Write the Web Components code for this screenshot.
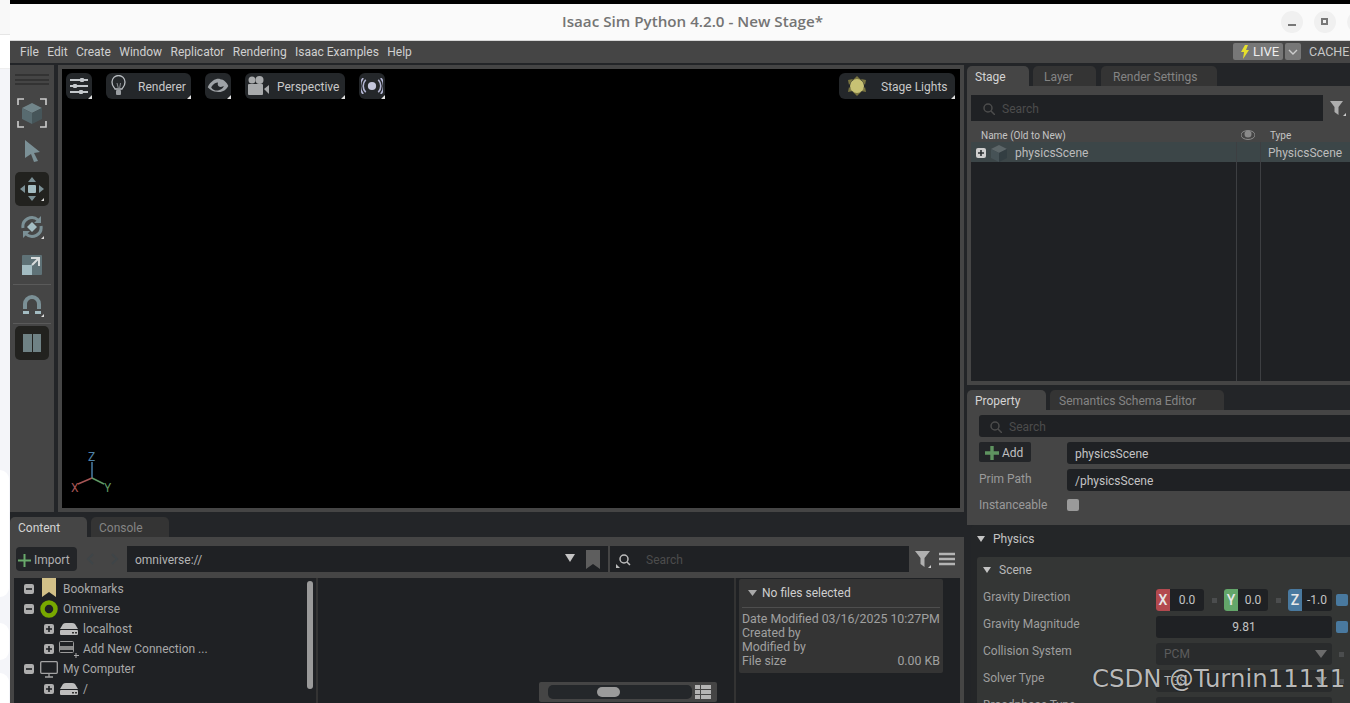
<!DOCTYPE html>
<html>
<head>
<meta charset="utf-8">
<title>Isaac Sim</title>
<style>
html,body{margin:0;height:703px;overflow:hidden;background:#232528;}
body{display:flex;font-family:Roboto,"Liberation Sans",sans-serif;font-size:12px;color:#b4b4b4;position:relative;}
</style>
</head>
<body>
<desk-strip></desk-strip>
<app-window></app-window>
<water-mark>CSDN @Turnin11111</water-mark>

<script>
// small helper, every element just stamps its own html into an open shadow root
class Base extends HTMLElement{
    constructor(){
        super();
        this.attachShadow({mode:"open"});
        this.shadowRoot.innerHTML = this.render();
    }
    attr(name, fallback){
        return this.hasAttribute(name) ? this.getAttribute(name) : fallback;
    }
}

class DeskStrip extends Base{
    render(){ return `
    <style>
    :host{display:flex;flex-direction:column;flex:none;width:10px;height:703px;background:#f4f5f9;overflow:hidden;}
    .a{height:34px;background:#f8f8f8;border-bottom:1px solid #e6e6e6;flex:none;}
    .b{height:33px;background:#fff;border-bottom:1px solid #eee;flex:none;}
    .c{height:401px;flex:none;}
    .d{height:127px;width:9px;background:#fff;border-radius:0 12px 12px 0;flex:none;}
    .e{margin-top:26px;height:37px;width:9px;background:#fff;border-radius:0 18px 18px 0;flex:none;}
    .f{margin-top:13px;height:40px;width:9px;background:#fff;border-radius:0 18px 18px 0;flex:none;}
    </style>
    <div class="a"></div><div class="b"></div><div class="c"></div><div class="d"></div><div class="e"></div><div class="f"></div>`; }
}

class TitleBar extends Base{
    render(){ return `
    <style>
    :host{display:flex;flex:none;height:36px;background:#fafafa;border-bottom:1px solid #d6d6d6;align-items:center;position:relative;}
    .t{flex:none;width:1365px;text-align:center;font:600 15.2px "Open Sans",sans-serif;color:#747474;padding-bottom:2px;}
    .btns{position:absolute;left:1271px;top:7px;display:flex;gap:11px;}
    .b{width:22px;height:22px;border-radius:50%;background:#f0f0f0;display:flex;align-items:center;justify-content:center;}
    </style>
    <div class="t">Isaac Sim Python 4.2.0 - New Stage*</div>
    <div class="btns">
      <div class="b"><svg width="10" height="10"><rect x="1" y="7" width="8" height="2" fill="#777"/></svg></div>
      <div class="b"><svg width="10" height="10"><path fill="#777" fill-rule="evenodd" d="M1 1h7v7H1zM3 3v3h3V3z"/></svg></div>
      <div class="b"></div>
    </div>`; }
}

class MenuBar extends Base{
    render(){ return `
    <style>
    :host{display:flex;flex:none;height:22px;background:#454545;align-items:center;padding:0 0 1px 10px;box-sizing:border-box;color:#d0d0d0;font-size:12px;white-space:nowrap;}
    span{margin-right:8.4px;}
    .live{position:absolute;left:1223px;top:43px;width:50px;height:17px;background:#777;border-radius:2px;color:#eee;display:flex;align-items:center;padding-left:8px;box-sizing:border-box;gap:4px;font-size:13px;}
    .drop{position:absolute;left:1275px;top:43px;width:16px;height:17px;background:#777;border-radius:2px;display:flex;align-items:center;justify-content:center;}
    .cache{position:absolute;left:1299px;top:44px;color:#c8c8c8;font-size:12.5px;}
    </style>
    <span>File</span><span>Edit</span><span>Create</span><span>Window</span><span>Replicator</span><span>Rendering</span><span>Isaac Examples</span><span>Help</span>
    <div class="live"><svg width="8" height="14" viewBox="0 0 8 14"><path fill="#e6e02c" d="M4 0h3L5 5h3L2 14l1-7H0z"/></svg>LIVE</div>
    <div class="drop"><svg width="10" height="6"><path d="M1 1l4 4 4-4" fill="none" stroke="#ccc" stroke-width="1.400"/></svg></div>
    <div class="cache">CACHE</div>`; }
}

const toolColor = "#7b9096";

class SideTools extends Base{
    render(){ return `
    <style>
    :host{display:flex;flex-direction:column;flex:none;width:44px;height:447px;background:#454545;align-items:center;box-sizing:border-box;padding-top:9px;}
    .grip{width:34px;flex:none;border-top:2px solid #333;border-bottom:2px solid #333;position:relative;height:7px;}
    .grip:after{content:"";position:absolute;left:0;right:0;top:2.5px;height:2px;background:#333;}
    .tool{width:34px;height:34px;flex:none;display:flex;align-items:center;justify-content:center;margin-top:4px;border-radius:5px;position:relative;}
    .on{background:#22221f;}
    .tri:after{content:"";position:absolute;right:5px;bottom:5px;border-left:3px solid transparent;border-bottom:3px solid #ddd;}
    .sep{width:38px;height:1px;background:#5a5a5a;flex:none;}
    </style>
    <div class="grip"></div>
    <div class="tool" style="margin-top:11px"><svg width="30" height="30" viewBox="0 0 30 30">
      <path d="M1 7V1h6M23 1h6v6M1 23v6h6M23 29h6v-6" fill="none" stroke="#ccc" stroke-width="1.600"/>
      <path d="M15 5l10 5-10 5-10-5z" fill="#71858a"/><path d="M5 10l10 5v11L5 21z" fill="#586b70"/><path d="M25 10l-10 5v11l10-5z" fill="#465559"/>
    </svg></div>
    <div class="tool"><svg width="18" height="24" viewBox="0 0 18 24"><path fill="${toolColor}" d="M2 1l15 12-6 1 4 8-4 1-3-8-6 4z"/></svg></div>
    <div class="tool on tri"><svg width="24" height="24" viewBox="0 0 24 24"><g fill="${toolColor}"><rect x="8" y="8" width="8" height="8" rx="1" fill="#a3bcc2"/><path d="M12 0l4 5H8zM12 24l-4-5h8zM0 12l5-4v8zM24 12l-5 4V8z"/></g></svg></div>
    <div class="tool tri"><svg width="24" height="24" viewBox="0 0 24 24"><path d="M12 7l5 5-5 5-5-5z" fill="#a3bcc2"/><path d="M3 13a9 9 0 0 1 15-8M21 11a9 9 0 0 1-15 8" fill="none" stroke="${toolColor}" stroke-width="3"/><path d="M21 1v7h-7zM3 23v-7h7z" fill="${toolColor}"/></svg></div>
    <div class="tool"><svg width="20" height="20" viewBox="0 0 20 20"><rect width="20" height="20" rx="1" fill="#5f7277"/><rect y="10" width="10" height="10" fill="#a3bcc2"/><path d="M9 3h8v8M16 4l-6 6" fill="none" stroke="#d8dcdc" stroke-width="2"/></svg></div>
    <div class="sep" style="margin-top:2px"></div>
    <div class="tool tri" style="margin-top:3px"><svg width="20" height="20" viewBox="0 0 20 20"><path d="M3 14V9a7 7 0 0 1 14 0v5" fill="none" stroke="${toolColor}" stroke-width="4"/><rect x="1" y="16" width="6" height="3" fill="#a3bcc2"/><rect x="13" y="16" width="6" height="3" fill="#a3bcc2"/></svg></div>
    <div class="sep" style="margin-top:1px"></div>
    <div class="tool on" style="margin-top:2px"><svg width="20" height="20" viewBox="0 0 20 20"><rect x="1" y="1" width="9" height="18" fill="#6f8285"/><rect x="11" y="1" width="8" height="18" fill="#6f8285"/></svg></div>`; }
}

// button floating on the black viewport, label optional
class VpButton extends Base{
    render(){
        const label = this.attr("label","");
        return `
    <style>
    :host{display:flex;flex:none;height:26px;width:26px;justify-content:center;background:#24272a;border-radius:6px;align-items:center;position:relative;box-sizing:border-box;color:#c8c8c8;font-size:12px;white-space:nowrap;}
    :host([label]){justify-content:flex-start;padding-left:var(--pad,4px);}
    .c{position:absolute;right:0;bottom:0;border-left:4px solid transparent;border-bottom:4px solid #e0e0e0;}
    .l{margin-left:var(--gap,8px);padding-top:2px;}
    </style>
    <slot></slot>${label ? `<span class="l">${label}</span>` : ""}<i class="c"></i>`;
    }
}

class ViewPort extends Base{
    render(){ return `
    <style>
    :host{display:block;flex:1;height:447px;background:#454545;box-sizing:border-box;padding:4px;}
    .black{height:439px;background:#000;position:relative;box-sizing:border-box;padding:4px 5px 0 4px;display:flex;gap:14px;}
    .sp{flex:1;}
    .axis{position:absolute;left:6px;bottom:12px;}
    </style>
    <div class="black">
      <vp-button><svg width="18" height="18" viewBox="0 0 18 18"><g stroke="#c4c8cc" stroke-width="2"><path d="M0 3h18M0 9h18M0 15h18"/></g><g fill="#c4c8cc"><rect x="10" y="1" width="4" height="4" rx="1"/><rect x="3" y="7" width="4" height="4" rx="1"/><rect x="9" y="13" width="4" height="4" rx="1"/></g></svg></vp-button>
      <vp-button label="Renderer" style="width:85px;--pad:4px;--gap:9px"><svg width="19" height="22" viewBox="0 0 19 22"><path d="M5 14c-1-2-3-3-3-7a6.500 6.500 0 0 1 13 0c0 4-2 5-3 7z" fill="none" stroke="#b8bcc0" stroke-width="1.300"/><path d="M7 8l1.500 6M10.500 8L9.500 14" stroke="#8a8e92" fill="none"/><rect x="6" y="15" width="5" height="5" rx="1" fill="#9a9ea2"/></svg></vp-button>
      <vp-button><svg width="22" height="16" viewBox="0 0 18 14"><path d="M0 8C3 2 8 0 11 1c3 0 6 3 7 6-2 4-6 6-10 5-3 0-6-2-8-4z" fill="#9ea2a6"/><path d="M3 8c2-3 4-4 6-4-1 3 1 5 5 3 0 2-4 4-6 4-2 0-4-1-5-3z" fill="#24272a"/></svg></vp-button>
      <vp-button label="Perspective" style="width:100px;--pad:2px;--gap:7px"><svg width="23" height="20" viewBox="0 0 23 20"><g fill="#a8aaac"><circle cx="5" cy="4" r="3.500"/><circle cx="12.500" cy="4" r="4"/><rect x="1" y="8" width="15" height="11" rx="1"/><path d="M17 13l5-4v9z"/></g></svg></vp-button>
      <vp-button><svg width="22" height="16" viewBox="0 0 18 14"><circle cx="9" cy="7" r="3.600" fill="#c4c6dc"/><path d="M3.500 1.500a8 8 0 0 0 0 11M14.500 1.500a8 8 0 0 1 0 11M1.300 0a11 11 0 0 0 0 14M16.700 0a11 11 0 0 1 0 14" fill="none" stroke="#b4b6d4" stroke-width="1.400"/></svg></vp-button>
      <div class="sp"></div>
      <vp-button label="Stage Lights" style="width:116px;--pad:9px;--gap:15px"><svg width="18" height="20" viewBox="0 0 18 20"><g fill="#7a7540"><path d="M5 4l4-4 4 4zM5 16l4 4 4-4zM13 3l5 1-1 5zM1 11L0 16l5-1zM17 11l1 5-5-1zM1 9L0 4l5-1z"/></g><circle cx="9" cy="10" r="7" fill="#c8c274"/></svg></vp-button>
      <svg class="axis" width="44" height="46" viewBox="0 0 44 46">
        <path d="M24 28V12" stroke="#4a7ea6" stroke-width="1.500"/><path d="M24 28l-14 6" stroke="#a85656" stroke-width="1.500"/><path d="M24 28l12 6" stroke="#5f9a64" stroke-width="1.500"/>
        <text x="20" y="11" font-size="12" font-family="Roboto" fill="#4f82a8">Z</text>
        <text x="3" y="42" font-size="12" font-family="Roboto" fill="#a85656">X</text>
        <text x="36" y="42" font-size="12" font-family="Roboto" fill="#5f9a64">Y</text>
      </svg>
    </div>`; }
}

class PanelTab extends Base{
    render(){ return `
    <style>
    :host{display:flex;flex:none;height:20px;align-items:center;background:#343434;color:#848484;border-radius:5px 5px 0 0;box-sizing:border-box;padding:2px 8px 0;font-size:12px;margin-right:4px;white-space:nowrap;}
    :host([on]){background:#454545;color:#d4d4d4;}
    </style><slot></slot>`; }
}

class TreeRow extends Base{
    render(){
        const d = +this.attr("depth","0");
        const open = this.hasAttribute("open");
        return `
    <style>
    :host{display:flex;flex:none;height:20px;align-items:center;color:#a8a8a8;font-size:12px;white-space:nowrap;box-sizing:border-box;padding-left:${10+d*20}px;position:relative;}
    .ic{width:28px;height:20px;margin-left:1px;display:flex;align-items:center;justify-content:center;flex:none;}
    </style>
    <svg width="10" height="10" viewBox="0 0 10 10" style="flex:none"><rect width="10" height="10" rx="2" fill="#aeaeae"/><path d="${open ? "M2 5h6" : "M2 5h6M5 2v6"}" stroke="#1f2124" stroke-width="1.600"/></svg>
    <div class="ic"><slot name="icon"></slot></div><slot></slot>`;
    }
}

class ContentPanel extends Base{
    render(){ return `
    <style>
    :host{display:block;flex:none;}
    .tabs{display:flex;height:20px;margin-top:5px;}
    .body{height:166px;background:#454545;box-sizing:border-box;border-right:4px solid #454545;border-left:4px solid #454545;position:relative;}
    .bar{display:flex;height:41px;align-items:center;margin-left:2px;}
    .import{display:flex;align-items:center;width:61px;height:24px;background:#232528;border-radius:4px;flex:none;box-sizing:border-box;padding:2px 0 0 2px;color:#b0b0b0;gap:3px;margin-top:3px;}
    .nav{width:50px;flex:none;display:flex;align-items:center;justify-content:space-around;margin-top:3px;}
    .path{width:481px;height:26px;background:#1f2124;box-sizing:border-box;flex:none;padding:2px 0 0 8px;display:flex;align-items:center;color:#b4b4b4;position:relative;margin-top:3px;}
    .path svg{position:absolute;}
    .search{margin-left:2px;width:299px;height:26px;background:#1f2124;flex:none;display:flex;align-items:center;box-sizing:border-box;padding:2px 0 0 6px;color:#4c4c4c;gap:15px;margin-top:3px;}
    .tools{display:flex;align-items:center;margin-left:6px;gap:8px;margin-top:3px;}
    .main{display:flex;height:125px;background:#1f2124;}
    .tree{width:302px;flex:none;display:flex;flex-direction:column;position:relative;overflow:hidden;box-sizing:border-box;padding-top:1px;}
    .scroll{position:absolute;left:293px;top:3px;width:6px;height:108px;background:#9a9a9a;border-radius:3px;}
    .files{width:416px;flex:none;border-left:2px solid #333;position:relative;}
    .thumb{position:absolute;left:221px;top:104px;width:178px;height:20px;background:#454545;border-radius:2px;display:flex;align-items:center;box-sizing:border-box;padding:0 6px 0 9px;}
    .track{width:144px;height:14px;background:#24272a;border-radius:5px;position:relative;flex:none;margin-right:3px;}
    .knob{position:absolute;left:49px;top:2px;width:23px;height:10px;background:#9a9a9a;border-radius:5px;}
    .side{flex:1;border-left:2px solid #333;padding:1px 0 0 3px;}
    .card{width:204px;height:94px;background:#343434;border-radius:2px;box-sizing:border-box;padding:0 3px;color:#a0a0a0;line-height:14px;}
    .hd{height:29px;border-bottom:1px solid #4e4e4e;display:flex;align-items:center;color:#cfcfcf;padding-left:6px;gap:5px;box-sizing:border-box;margin-bottom:4px;}
    .kv{display:flex;justify-content:space-between;white-space:nowrap;font-size:12.35px;}
    </style>
    <div class="tabs"><panel-tab on style="width:77px">Content</panel-tab><panel-tab style="width:78px">Console</panel-tab></div>
    <div class="body">
      <div class="bar">
        <div class="import"><svg width="13" height="13"><path d="M6.500 0v13M0 6.500h13" stroke="#69a96b" stroke-width="2"/></svg>Import</div>
        <div class="nav"><svg width="8" height="12"><path d="M7 1L2 6l5 5" fill="none" stroke="#3f4548" stroke-width="2"/></svg><svg width="8" height="12"><path d="M1 1l5 5-5 5" fill="none" stroke="#3f4548" stroke-width="2"/></svg></div>
        <div class="path">omniverse://
          <svg style="left:438px;top:8px" width="10" height="8"><path d="M0 0h10L5 8z" fill="#c4c4c4"/></svg>
          <svg style="left:459px;top:4px" width="14" height="19"><path d="M0 0h14v19l-7-5-7 5z" fill="#5e5e5e"/></svg>
        </div>
        <div class="search"><svg width="15" height="15" viewBox="0 0 15 15"><circle cx="8" cy="6" r="4" fill="none" stroke="#bdbdbd" stroke-width="1.500"/><path d="M11 9l3 3" stroke="#bdbdbd" stroke-width="1.500"/><path d="M0 11v4h4z" fill="#bdbdbd"/></svg>Search</div>
        <div class="tools">
          <svg width="16" height="18" viewBox="0 0 16 18"><path d="M0 1h15L9.500 8v9l-4-3V8z" fill="#b0b0b0"/><path d="M13 18h3v-3z" fill="#ccc"/></svg>
          <svg width="16" height="14"><path d="M0 2h16M0 7h16M0 12h16" stroke="#b4b4b4" stroke-width="2.600"/></svg>
        </div>
      </div>
      <div class="main">
        <div class="tree">
          <tree-row open>
            <svg slot="icon" width="14" height="20" viewBox="0 0 14 20" style="margin-top:-3px"><path d="M0 0h14v19l-7-5-7 5z" fill="#d2c088"/></svg>Bookmarks</tree-row>
          <tree-row open>
            <svg slot="icon" width="18" height="18" viewBox="0 0 18 18"><circle cx="9" cy="9" r="6.500" fill="none" stroke="#78a800" stroke-width="4.500"/></svg>Omniverse</tree-row>
          <tree-row depth="1"><svg slot="icon" width="18" height="12" viewBox="0 0 18 12"><path d="M0 6l3-5q1-1 3-1h6q2 0 3 1l3 5z" fill="#bdbdbd"/><rect y="7" width="18" height="5" rx="1" fill="#bdbdbd"/><rect x="12" y="9" width="2" height="1.500" fill="#333"/><rect x="15" y="9" width="2" height="1.500" fill="#333"/></svg>localhost</tree-row>
          <tree-row depth="1"><svg slot="icon" width="20" height="17" viewBox="0 0 20 17"><rect x=".5" y=".5" width="14" height="11" rx="1" fill="none" stroke="#9a9a9a"/><rect x="1" y="5" width="13" height="4" fill="#8a8a8a"/><path d="M17 12v5M15 14.500h5" stroke="#aaa"/></svg>Add New Connection ...</tree-row>
          <tree-row open><svg slot="icon" width="18" height="17" viewBox="0 0 18 17"><rect x=".7" y=".7" width="16.600" height="11.600" rx="1" fill="none" stroke="#a4a4a4" stroke-width="1.300"/><path d="M9 12.500v3M5 16h8" stroke="#a4a4a4" stroke-width="1.300"/></svg>My Computer</tree-row>
          <tree-row depth="1"><svg slot="icon" width="18" height="12" viewBox="0 0 18 12"><path d="M0 6l3-5q1-1 3-1h6q2 0 3 1l3 5z" fill="#bdbdbd"/><rect y="7" width="18" height="5" rx="1" fill="#bdbdbd"/><rect x="12" y="9" width="2" height="1.500" fill="#333"/><rect x="15" y="9" width="2" height="1.500" fill="#333"/></svg>/</tree-row>
          <div class="scroll"></div>
        </div>
        <div class="files">
          <div class="thumb"><div class="track"><div class="knob"></div></div>
            <svg width="16" height="14"><path fill="#b4b4b4" d="M0 0h5v4H0zM6 0h10v4H6zM0 5h5v4H0zM6 5h10v4H6zM0 10h5v4H0zM6 10h10v4H6z"/></svg></div>
        </div>
        <div class="side">
          <div class="card">
            <div class="hd"><svg width="9" height="6"><path d="M0 0h9L4.500 6z" fill="#a8a8a8"/></svg>No files selected</div>
            <div class="kv"><span>Date Modified 03/16/2025 10:27PM</span></div>
            <div class="kv"><span>Created by</span></div>
            <div class="kv"><span>Modified by</span></div>
            <div class="kv"><span>File size</span><span>0.00 KB</span></div>
          </div>
        </div>
      </div>
    </div>`; }
}

class StagePanel extends Base{
    render(){ return `
    <style>
    :host{display:block;flex:none;}
    .tabs{display:flex;height:20px;margin-top:1px;}
    .body{height:295px;background:#454545;box-sizing:border-box;padding:9px 0 0 4px;}
    .sr{display:flex;align-items:center;height:26px;}
    .search{width:352px;height:26px;background:#1f2124;flex:none;display:flex;align-items:center;box-sizing:border-box;padding:2px 0 0 12px;gap:7px;color:#4c4c4c;}
    .filter{margin-left:7px;}
    .hd{display:flex;height:14px;margin-top:7px;align-items:center;color:#c4c4c4;font-size:10px;background:#454545;}
    .tree{height:239px;background:#1f2124;position:relative;}
    .row{display:flex;height:20px;background:#3c4648;align-items:center;color:#bcbcbc;}
    .c1{width:265px;flex:none;display:flex;align-items:center;padding:2px 0 0 5px;box-sizing:border-box;height:100%;}
    .c2{width:24px;flex:none;height:100%;box-sizing:border-box;}
    .c3{padding:2px 0 0 8px;white-space:nowrap;}
    .v{position:absolute;top:0;bottom:0;width:1px;background:#3d3f42;}
    </style>
    <div class="tabs"><panel-tab on style="width:62px">Stage</panel-tab><panel-tab style="width:63px;padding-left:11px">Layer</panel-tab><panel-tab style="width:116px;padding-left:12px;margin-left:1px">Render Settings</panel-tab></div>
    <div class="body">
      <div class="sr"><div class="search"><svg width="12" height="12" viewBox="0 0 12 12"><circle cx="5" cy="5" r="4" fill="none" stroke="#4c4c4c" stroke-width="1.500"/><path d="M8 8l4 4" stroke="#4c4c4c" stroke-width="1.500"/></svg>Search</div>
        <svg class="filter" width="16" height="16" viewBox="0 0 16 16"><path d="M0 1h13L8.500 7v8l-4-3V7z" fill="#adadad"/><path d="M13 16h3v-3z" fill="#ccc"/></svg></div>
      <div class="hd"><span style="width:266px;padding-left:10px;box-sizing:border-box;">Name (Old to New)</span><svg width="14" height="12" viewBox="0 0 14 12" style="margin-left:4px"><ellipse cx="7" cy="6" rx="7" ry="4.500" fill="none" stroke="#8a8a8a"/><circle cx="7" cy="5" r="3.500" fill="#8a8a8a"/></svg><span style="margin-left:15px">Type</span></div>
      <div class="tree">
        <div class="row">
          <div class="c1">
            <svg width="10" height="10" viewBox="0 0 10 10"><rect width="10" height="10" rx="2" fill="#cfcfcf"/><path d="M2 5h6M5 2v6" stroke="#2b3032" stroke-width="1.600"/></svg>
            <svg style="margin:0 8px 0 5px" width="16" height="17" viewBox="0 0 16 17"><path d="M8 0l8 4-8 4-8-4z" fill="#5c6668"/><path d="M0 4l8 4v9l-8-4z" fill="#465256"/><path d="M16 4L8 8v9l8-4z" fill="#333e42"/></svg>
            physicsScene</div>
          <div class="c2"></div>
          <div class="c3">PhysicsScene</div>
        </div>
        <div class="v" style="left:265px"></div><div class="v" style="left:289px"></div>
      </div>
    </div>`; }
}

class PropRow extends Base{
    render(){ return `
    <style>
    :host{display:flex;height:22px;align-items:center;flex:none;margin-bottom:5px;color:#9e9e9e;}
    .l{width:179px;flex:none;padding-left:6px;box-sizing:border-box;padding-bottom:6px;white-space:nowrap;}
    </style>
    <div class="l">${this.attr("label","")}</div><slot></slot>`; }
}

class VecField extends Base{
    render(){
        const c = this.attr("color","#444");
        return `
    <style>
    :host{display:flex;height:22px;width:var(--w,48px);background:#1f2124;border-radius:3px;overflow:hidden;flex:none;color:#c4c4c4;}
    .k{width:14px;flex:none;background:${c};color:#e8e8e8;display:flex;align-items:center;justify-content:center;font-size:14px;font-weight:500;}
    .v{flex:1;display:flex;align-items:center;justify-content:center;font-size:12px;}
    </style>
    <div class="k">${this.attr("key","")}</div><div class="v">${this.attr("val","")}</div>`;
    }
}

class PropertyPanel extends Base{
    render(){
        const dot = `<i style="display:block;width:5px;height:5px;background:#4b4d4e;flex:none"></i>`;
        const blue = `<i style="display:block;width:12px;height:12px;background:#49799f;border-radius:2px;flex:none;margin-left:4px"></i>`;
        return `
    <style>
    :host{display:block;flex:none;}
    .tabs{display:flex;height:20px;margin-top:5px;}
    .body{background:#454545;box-sizing:border-box;height:115px;padding-top:5px;}
    .search{margin-left:12px;height:22px;background:#1f2124;display:flex;align-items:center;padding:2px 0 0 11px;box-sizing:border-box;gap:7px;color:#4c4c4c;border-radius:3px 0 0 3px;}
    .line{display:flex;align-items:center;height:22px;margin-top:5px;padding-left:12px;color:#9a9a9a;}
    .lab{width:88px;flex:none;white-space:nowrap;padding-bottom:3px;}
    .fld{flex:1;height:22px;background:#1f2124;border-radius:3px 0 0 3px;display:flex;align-items:center;padding:2px 0 0 8px;box-sizing:border-box;color:#c4c4c4;}
    .add{width:52px;height:20px;background:#232528;border-radius:2px;display:flex;align-items:center;box-sizing:border-box;padding:2px 0 0 6px;gap:3px;color:#c0c0c0;margin-right:36px;flex:none;align-self:flex-start;}
    .chk{width:12px;height:12px;background:#9a9a9a;border-radius:2px;}
    .phys{height:178px;background:#242628;margin-left:4px;border-radius:3px 0 0 0;box-sizing:border-box;}
    .h{height:32px;display:flex;align-items:center;padding:0 0 4px 6px;box-sizing:border-box;gap:8px;color:#c4c4c4;}
    .scene{margin-left:6px;background:#343635;height:146px;border-radius:3px 0 0 0;padding-top:1px;box-sizing:border-box;}
    .rows{padding-top:7px;display:flex;flex-direction:column;}
    .sh{height:24px;display:flex;align-items:center;padding-left:6px;gap:8px;color:#b8b8b8;}
    .wide{width:176px;height:22px;background:#1f2124;border-radius:3px;flex:none;display:flex;align-items:center;justify-content:center;color:#c4c4c4;position:relative;}
    .dis{justify-content:flex-start;padding-left:8px;box-sizing:border-box;color:#5c5c5c;background:#292b2c;}
    .dis svg{position:absolute;right:5px;top:7px;}
    .vec{display:flex;align-items:center;}
    </style>
    <div class="tabs"><panel-tab on style="width:79px">Property</panel-tab><panel-tab style="width:174px;padding-left:9px">Semantics Schema Editor</panel-tab></div>
    <div class="body">
      <div class="search"><svg width="12" height="12" viewBox="0 0 12 12"><circle cx="5" cy="5" r="4" fill="none" stroke="#4c4c4c" stroke-width="1.500"/><path d="M8 8l4 4" stroke="#4c4c4c" stroke-width="1.500"/></svg>Search</div>
      <div class="line"><div class="add"><svg width="14" height="14"><path d="M7 0v14M0 7h14" stroke="#5f9460" stroke-width="3.400"/></svg>Add</div><div class="fld">physicsScene</div></div>
      <div class="line"><div class="lab">Prim Path</div><div class="fld">/physicsScene</div></div>
      <div class="line" style="margin-top:3px"><div class="lab" style="padding-bottom:1px">Instanceable</div><div class="chk"></div></div>
    </div>
    <div class="phys">
      <div class="h"><svg width="8" height="6"><path d="M0 0h8L4 6z" fill="#c4c4c4"/></svg>Physics</div>
      <div class="scene">
        <div class="sh"><svg width="8" height="6"><path d="M0 0h8L4 6z" fill="#c4c4c4"/></svg>Scene</div>
        <div class="rows">
          <prop-row label="Gravity Direction"><div class="vec">
            <vec-field key="X" val="0.0" color="#b3494f"></vec-field><div style="width:20px;display:flex;justify-content:center">${dot}</div>
            <vec-field key="Y" val="0.0" color="#63a66a" style="--w:44px"></vec-field><div style="width:20px;display:flex;justify-content:center">${dot}</div>
            <vec-field key="Z" val="-1.0" color="#49799f" style="--w:44px"></vec-field></div>${blue}</prop-row>
          <prop-row label="Gravity Magnitude"><div class="wide">9.81</div>${blue}</prop-row>
          <prop-row label="Collision System"><div class="wide dis">PCM<svg width="12" height="8"><path d="M0 0h12L6 8z" fill="#6c6c6c"/></svg></div><span style="margin-left:7px">${dot}</span></prop-row>
          <prop-row label="Solver Type"><div class="wide dis" style="color:#b8b8b8">TGS<svg width="12" height="8"><path d="M0 0h12L6 8z" fill="#8a8a8a"/></svg></div><span style="margin-left:7px">${dot}</span></prop-row>
          <prop-row label="Broadphase Type"><div class="wide dis"></div></prop-row>
        </div>
      </div>
    </div>`;
    }
}

class AppWindow extends Base{
    render(){ return `
    <style>
    :host{display:flex;flex-direction:column;flex:none;width:1340px;height:703px;background:#232528;overflow:hidden;position:relative;}
    .cap{height:4px;background:#000;flex:none;}
    .main{display:flex;flex:none;padding-top:2px;}
    .left{width:954px;flex:none;display:flex;flex-direction:column;}
    .top{display:flex;gap:4px;}
    .right{width:383px;flex:none;margin-left:3px;display:flex;flex-direction:column;}
    </style>
    <div class="cap"></div>
    <title-bar></title-bar>
    <menu-bar></menu-bar>
    <div class="main">
      <div class="left">
        <div class="top"><side-tools></side-tools><view-port></view-port></div>
        <content-panel></content-panel>
      </div>
      <div class="right"><stage-panel></stage-panel><div style="height:4px;background:#454545;flex:none"></div><property-panel></property-panel></div>
    </div>`; }
}

class WaterMark extends Base{
    render(){ return `
    <style>
    :host{display:block;position:absolute;left:1092px;top:664px;font:24.4px "DejaVu Sans",sans-serif;color:#b9b9b9;white-space:nowrap;line-height:30px;text-shadow:0 0 1px #000;}
    </style><slot></slot>`; }
}

// children first so nested shadow roots upgrade as they are stamped
customElements.define("vp-button", VpButton);
customElements.define("panel-tab", PanelTab);
customElements.define("tree-row", TreeRow);
customElements.define("prop-row", PropRow);
customElements.define("vec-field", VecField);
customElements.define("desk-strip", DeskStrip);
customElements.define("title-bar", TitleBar);
customElements.define("menu-bar", MenuBar);
customElements.define("side-tools", SideTools);
customElements.define("view-port", ViewPort);
customElements.define("content-panel", ContentPanel);
customElements.define("stage-panel", StagePanel);
customElements.define("property-panel", PropertyPanel);
customElements.define("app-window", AppWindow);
customElements.define("water-mark", WaterMark);
</script>
</body>
</html>
